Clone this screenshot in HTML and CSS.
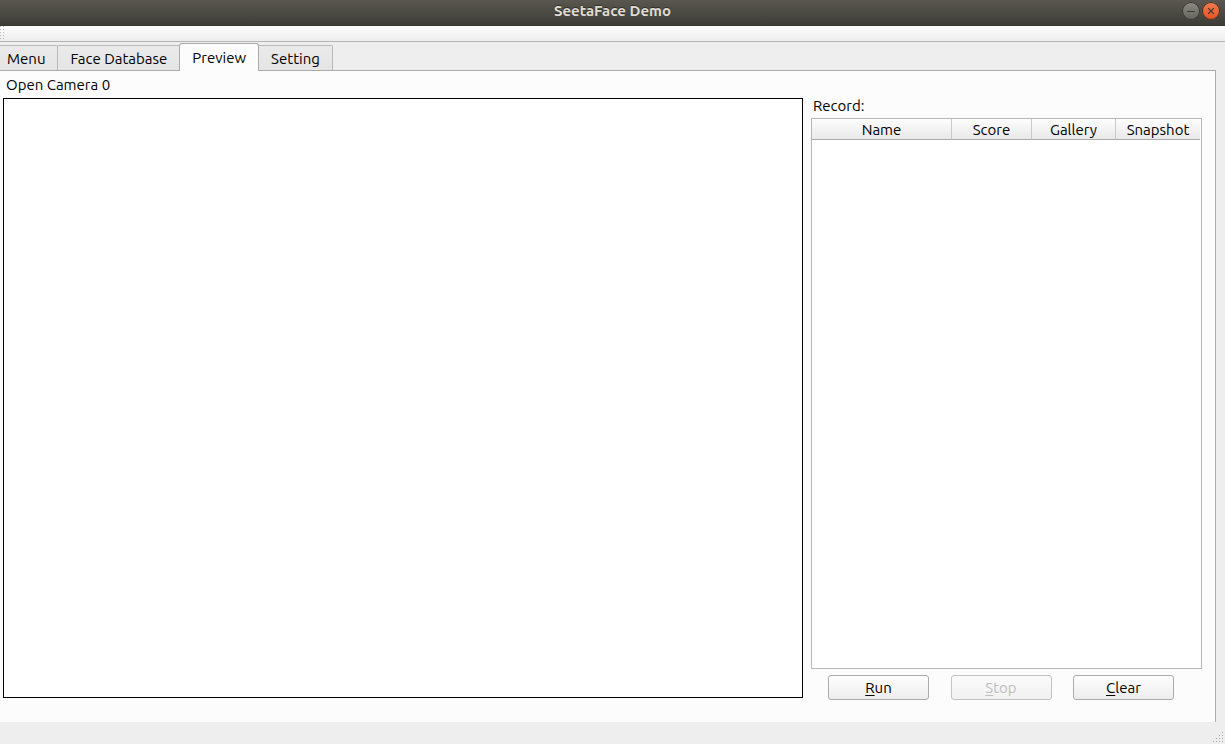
FILE: index.html
```html
<!DOCTYPE html>
<html lang="en">
<head>
  <meta charset="UTF-8" />
  <meta name="viewport" content="width=device-width, initial-scale=1.0"/>
  <title>SeetaFace Demo</title>
  <link rel="stylesheet" href="styles.css">
</head>
<body>
  <header class="titlebar">
    <h1>SeetaFace Demo</h1>
    <div class="window-buttons">
      <button type="button" class="window-btn" aria-label="Minimize">
        <svg viewBox="0 0 18 18" width="18" height="18"><path d="M5 9.5h8" /></svg>
      </button>
      <button type="button" class="window-btn close" aria-label="Close">
        <svg viewBox="0 0 18 18" width="18" height="18"><path d="M6.2 6.2l5.6 5.6M11.8 6.2l-5.6 5.6" /></svg>
      </button>
    </div>
  </header>

  <div class="toolbar"><span class="toolbar-handle"></span></div>

  <nav class="tabs" role="tablist">
    <button type="button" class="tab first" role="tab">Menu</button>
    <button type="button" class="tab" role="tab">Face Database</button>
    <button type="button" class="tab active" role="tab" aria-selected="true">Preview</button>
    <button type="button" class="tab" role="tab">Setting</button>
  </nav>

  <main class="pane">
    <section class="camera">
      <p class="camera-status">Open Camera 0</p>
      <div class="camera-view"></div>
    </section>

    <section class="record">
      <h2 id="recordTitle">Record:</h2>
      <div class="record-list">
        <table aria-labelledby="recordTitle">
          <colgroup>
            <col class="col-name">
            <col class="col-score">
            <col class="col-gallery">
            <col class="col-snapshot">
          </colgroup>
          <thead>
            <tr><th>Name</th><th>Score</th><th>Gallery</th><th>Snapshot</th></tr>
          </thead>
          <tbody></tbody>
        </table>
      </div>
      <div class="actions">
        <button type="button"><u>R</u>un</button>
        <button type="button" disabled><u>S</u>top</button>
        <button type="button"><u>C</u>lear</button>
      </div>
    </section>
  </main>

  <footer class="statusbar">
    <svg class="size-grip" viewBox="0 0 11 11" width="11" height="11">
      <path d="M9 0h1v1h-1zM6 3h1v1h-1zM9 3h1v1h-1zM3 6h1v1h-1zM6 6h1v1h-1zM9 6h1v1h-1zM0 9h1v1h-1zM3 9h1v1h-1zM6 9h1v1h-1zM9 9h1v1h-1z" />
    </svg>
  </footer>
</body>
</html>
```

FILE: styles.css
```css
* {
  box-sizing: border-box;
}

body {
  margin: 0;
  min-height: 100vh;
  display: flex;
  flex-direction: column;
  background: #eeeeee;
  color: #000;
  font-family: Ubuntu, 'Noto Sans', sans-serif;
  font-size: 15px;
  line-height: 20px;
}

button {
  font: inherit;
  color: inherit;
}

h1,
h2,
p {
  margin: 0;
  font-size: inherit;
  font-weight: normal;
}

/* title bar */
.titlebar {
  display: grid;
  grid-template-columns: 1fr auto 1fr;
  height: 26px;
  padding: 1px 5px 3px;
  background: linear-gradient(#59574f, #3d3c37);
  border-bottom: 1px solid #393834;
}

.titlebar h1 {
  grid-column: 2;
  color: #dfdbd2;
  font-weight: bold;
  text-shadow: 0 -1px 0 #2e2d29;
}

.window-buttons {
  display: flex;
  justify-content: flex-end;
  align-items: flex-start;
  gap: 2px;
}

.window-btn {
  width: 18px;
  height: 18px;
  margin-top: 1px;
  padding: 0;
  border: 0;
  border-radius: 50%;
  background: linear-gradient(#8c8a82, #65645d);
  box-shadow: inset 0 0 0 1px #353430;
}

.window-btn.close {
  background: linear-gradient(#f47c55, #e2511f);
}

.window-btn svg {
  display: block;
  fill: none;
  stroke: #3a3833;
  stroke-width: 1;
}

.window-btn.close svg {
  stroke-width: 1.2;
}

/* toolbar */
.toolbar {
  display: flex;
  height: 16px;
  background: linear-gradient(#fdfdfd, #ededed);
  border-bottom: 1px solid #b4b4b4;
}

.toolbar-handle {
  width: 6px;
  background-image: linear-gradient(#b8b8b8 1px, transparent 1px);
  background-size: 3px 3px;
  -webkit-mask: repeating-linear-gradient(90deg, #000 0 1px, transparent 1px 3px);
  mask: repeating-linear-gradient(90deg, #000 0 1px, transparent 1px 3px);
}

/* tabs */
.tabs {
  display: flex;
  align-items: flex-end;
  height: 28px;
}

.tab {
  height: 25px;
  padding: 2px 12px 0;
  border: 1px solid #b9b9b9;
  border-left: 0;
  border-bottom: 0;
  border-radius: 0 2px 0 0;
  background: linear-gradient(#eaeaea, #e5e5e5);
}

.tab.first {
  padding-left: 7px;
}

.tab.active {
  position: relative;
  height: 28px;
  margin-left: -1px;
  margin-bottom: -1px;
  padding-bottom: 1px;
  border: 1px solid #ababab;
  border-bottom: 0;
  border-radius: 3px 3px 0 0;
  background: #fcfcfc;
}

/* preview page */
.pane {
  flex: 1;
  display: grid;
  grid-template-columns: 800fr 391fr;
  gap: 8px;
  margin-right: 9px;
  padding: 0 13px 22px 3px;
  background: #fcfcfc;
  border-top: 1px solid #ababab;
  border-right: 1px solid #ababab;
}

.camera,
.record {
  display: flex;
  flex-direction: column;
}

.camera {
  padding: 4px 0 2px;
}

.camera-status {
  padding: 0 3px 3px;
}

.camera-view {
  flex: 1;
  background: #fff;
  border: 1px solid #000;
}

.record {
  padding-top: 25px;
}

.record h2 {
  padding: 0 2px 2px;
}

.record-list {
  flex: 1;
  background: #fff;
  border: 1px solid #b7b7b7;
}

.record-list table {
  width: 100%;
  table-layout: fixed;
  border-collapse: separate;
  border-spacing: 0;
  padding-right: 1px;
}

.col-score {
  width: 80px;
}

.col-gallery,
.col-snapshot {
  width: 84px;
}

.record-list th {
  height: 21px;
  padding: 1px 0 0;
  font-weight: normal;
  line-height: 19px;
  background: linear-gradient(#fdfdfd, #e9e9e9);
  border-right: 1px solid #c9c9c9;
  border-bottom: 1px solid #ababab;
}

.record-list th:last-child {
  border-right: 0;
}

.actions {
  display: flex;
  justify-content: space-between;
  padding: 6px 28px 0 17px;
}

.actions button {
  width: 101px;
  height: 25px;
  padding: 0;
  border: 1px solid #ababab;
  border-radius: 3px;
  background: linear-gradient(#fefefe, #ededed);
}

.actions button:disabled {
  color: #bebebe;
  border-color: #c3c3c3;
  background: linear-gradient(#fbfbfb, #f1f1f1);
}

.actions u {
  text-underline-offset: 2px;
}

/* status bar */
.statusbar {
  display: flex;
  justify-content: flex-end;
  align-items: flex-end;
  height: 22px;
  padding: 0 1px 1px;
}

.size-grip {
  fill: #a8a8a8;
}
```
